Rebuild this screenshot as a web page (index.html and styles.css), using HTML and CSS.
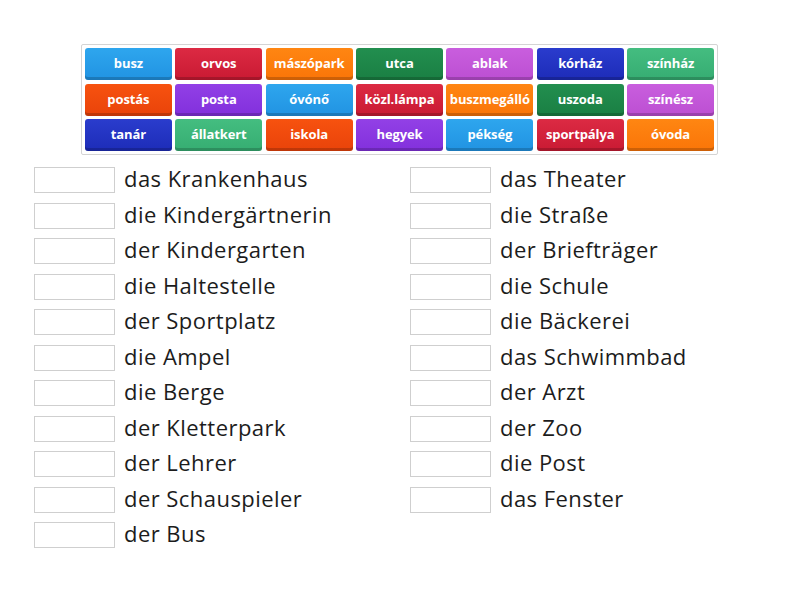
FILE: index.html
```html
<!DOCTYPE html>
<html>
<head>
<meta charset="utf-8">
<link rel="stylesheet" href="styles.css">
</head>
<body>
<div class="page">
  <div class="bank">
    <div class="tile c-blue">busz</div>
    <div class="tile c-red">orvos</div>
    <div class="tile c-orange">mászópark</div>
    <div class="tile c-green">utca</div>
    <div class="tile c-magenta">ablak</div>
    <div class="tile c-navy">kórház</div>
    <div class="tile c-teal">színház</div>
    <div class="tile c-redorange">postás</div>
    <div class="tile c-purple">posta</div>
    <div class="tile c-blue">óvónő</div>
    <div class="tile c-red">közl.lámpa</div>
    <div class="tile c-orange">buszmegálló</div>
    <div class="tile c-green">uszoda</div>
    <div class="tile c-magenta">színész</div>
    <div class="tile c-navy">tanár</div>
    <div class="tile c-teal">állatkert</div>
    <div class="tile c-redorange">iskola</div>
    <div class="tile c-purple">hegyek</div>
    <div class="tile c-blue">pékség</div>
    <div class="tile c-red">sportpálya</div>
    <div class="tile c-orange">óvoda</div>
  </div>
  <div class="columns">
    <div class="col">
      <div class="row"><span class="slot"></span><span class="label">das Krankenhaus</span></div>
      <div class="row"><span class="slot"></span><span class="label">die Kindergärtnerin</span></div>
      <div class="row"><span class="slot"></span><span class="label">der Kindergarten</span></div>
      <div class="row"><span class="slot"></span><span class="label">die Haltestelle</span></div>
      <div class="row"><span class="slot"></span><span class="label">der Sportplatz</span></div>
      <div class="row"><span class="slot"></span><span class="label">die Ampel</span></div>
      <div class="row"><span class="slot"></span><span class="label">die Berge</span></div>
      <div class="row"><span class="slot"></span><span class="label">der Kletterpark</span></div>
      <div class="row"><span class="slot"></span><span class="label">der Lehrer</span></div>
      <div class="row"><span class="slot"></span><span class="label">der Schauspieler</span></div>
      <div class="row"><span class="slot"></span><span class="label">der Bus</span></div>
    </div>
    <div class="col">
      <div class="row"><span class="slot"></span><span class="label">das Theater</span></div>
      <div class="row"><span class="slot"></span><span class="label">die Straße</span></div>
      <div class="row"><span class="slot"></span><span class="label">der Briefträger</span></div>
      <div class="row"><span class="slot"></span><span class="label">die Schule</span></div>
      <div class="row"><span class="slot"></span><span class="label">die Bäckerei</span></div>
      <div class="row"><span class="slot"></span><span class="label">das Schwimmbad</span></div>
      <div class="row"><span class="slot"></span><span class="label">der Arzt</span></div>
      <div class="row"><span class="slot"></span><span class="label">der Zoo</span></div>
      <div class="row"><span class="slot"></span><span class="label">die Post</span></div>
      <div class="row"><span class="slot"></span><span class="label">das Fenster</span></div>
    </div>
  </div>
</div>
</body>
</html>
```

FILE: styles.css
```css
html, body {
  margin: 0;
  padding: 0;
  background: #ffffff;
}
body {
  font-family: "Open Sans", Lato, sans-serif;
  color: #1a1a1a;
}
.page {
  padding: 44px 0 0 0;
}
.bank {
  width: 629px;
  margin-left: 81px;
  border: 1px solid #d4d4d4;
  border-radius: 2px;
  padding: 3px;
  display: grid;
  grid-template-columns: repeat(7, 1fr);
  column-gap: 3.5px;
  row-gap: 3.5px;
}
.tile {
  height: 32px;
  box-sizing: border-box;
  border-radius: 3px;
  color: #ffffff;
  font-weight: 700;
  font-size: 13px;
  display: flex;
  align-items: center;
  justify-content: center;
  white-space: nowrap;
  letter-spacing: -0.1px;
  box-shadow: inset 0 -3px 0 rgba(0,0,0,0.18);
  padding-bottom: 2px;
}
.c-blue { background: linear-gradient(#2ea6ee, #2193e2); }
.c-red { background: linear-gradient(#dc2a43, #c91a33); }
.c-orange { background: linear-gradient(#ff8612, #fa7508); }
.c-green { background: linear-gradient(#228f4f, #1a7f43); }
.c-magenta { background: linear-gradient(#c95ede, #bc4fd2); }
.c-navy { background: linear-gradient(#2a3ccd, #1d2cb8); }
.c-teal { background: linear-gradient(#44bd80, #36ad72); }
.c-redorange { background: linear-gradient(#f7520f, #e9430a); }
.c-purple { background: linear-gradient(#9240e6, #8230dc); }

.columns {
  display: flex;
  margin-top: 12px;
  padding-left: 34px;
}
.col {
  width: 376px;
  display: flex;
  flex-direction: column;
  row-gap: 9.5px;
}
.row {
  display: flex;
  align-items: center;
  height: 26px;
}
.slot {
  width: 81px;
  height: 26px;
  box-sizing: border-box;
  border: 1px solid #cfcfcf;
  background: #fff;
  flex: none;
}
.label {
  margin-left: 9px;
  font-size: 22px;
  letter-spacing: 0.45px;
  line-height: 26px;
  color: #1c1c1c;
  white-space: nowrap;
  position: relative;
  top: -2px;
}
```
